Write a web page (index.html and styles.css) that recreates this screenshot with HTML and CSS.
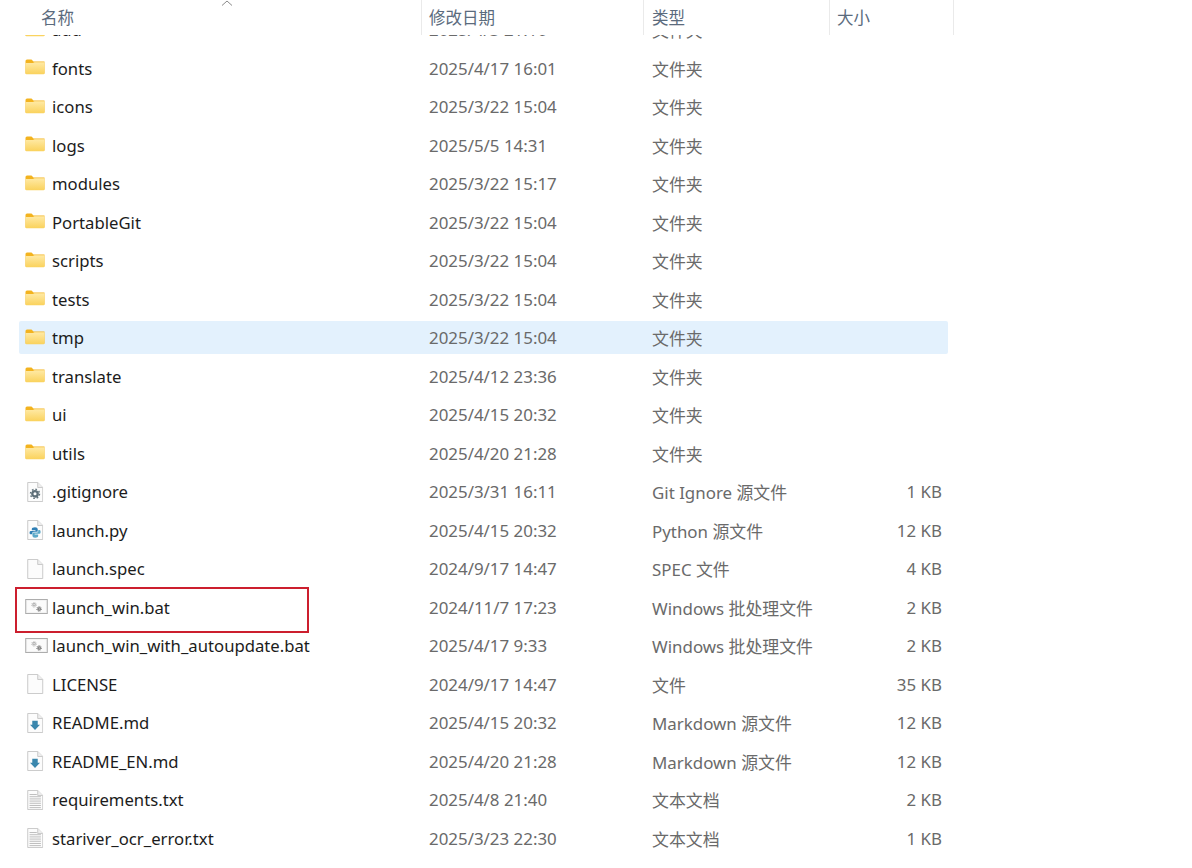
FILE: index.html
```html
<!DOCTYPE html>
<html lang="zh-CN">
<head>
    <meta charset="UTF-8">
    <title>launch</title>
    <link rel="stylesheet" href="styles.css">
</head>
<body>
    <svg class="defs" width="0" height="0">
        <defs>
            <linearGradient id="folderFill" x1="0" y1="0" x2="0" y2="1">
                <stop offset="0" stop-color="#ffeaa6"/>
                <stop offset="1" stop-color="#fad25c"/>
            </linearGradient>
            <symbol id="folder" viewBox="0 0 20 16">
                <path d="M0.5 2 Q0.5 0.5 2 0.5 H6.5 L8.5 2.5 H19.5 V14 Q19.5 15 18.5 15 H1.5 Q0.5 15 0.5 14 Z" fill="#f3b31f"/>
                <path d="M0.5 4 H8 L9.5 3.2 H19.5 V14.2 Q19.5 15.2 18.5 15.2 H1.5 Q0.5 15.2 0.5 14.2 Z" fill="url(#folderFill)"/>
            </symbol>
            <symbol id="page" viewBox="0 0 18 22">
                <path d="M1 0.5 H12 L17.5 6 V21.5 H1 Z" fill="#fcfcfc" stroke="#c4c4c4"/>
                <path d="M12 0.5 V6 H17.5" fill="#efefef" stroke="#c4c4c4"/>
            </symbol>
            <symbol id="gear-page" viewBox="0 0 18 22">
                <use href="#page"/>
                <circle cx="9" cy="13" r="3" fill="none" stroke="#5f7079" stroke-width="2.6"/>
                <circle cx="9" cy="13" r="5" fill="none" stroke="#5f7079" stroke-width="1.5" stroke-dasharray="1.8 2.1"/>
            </symbol>
            <symbol id="py-page" viewBox="0 0 18 22">
                <use href="#page"/>
                <path d="M9 8 Q5.5 8 5.5 9.8 V11.2 H9.5 V12 H4.2 Q3 12 3 14 Q3 15.8 4.2 15.8 H6 V14.5 Q6 13 8 13 H11 Q12 13 12 12 V9.8 Q12 8 9 8 Z" fill="#2f7fb5"/>
                <path d="M9 19.4 Q12.5 19.4 12.5 17.6 V16 H8.6 V15.2 H14 Q15.2 15.2 15.2 13.2 Q15.2 11 14 11 H12.6 V12.4 Q12.6 13.8 11 13.8 H7.5 Q6.2 13.8 6.2 15.2 V17.6 Q6.2 19.4 9 19.4 Z" fill="#5aa8c8"/>
            </symbol>
            <symbol id="md-page" viewBox="0 0 18 22">
                <use href="#page"/>
                <path d="M6 8.5 H12 V13 H14.5 L9 18.8 L3.5 13 H6 Z" fill="#3a87ad"/>
            </symbol>
            <symbol id="txt-page" viewBox="0 0 18 22">
                <use href="#page"/>
                <path d="M3 5 H11 M3 7.4 H15.5 M3 9.8 H15.5 M3 12.2 H15.5 M3 14.6 H15.5 M3 17 H15.5 M3 19.4 H15.5" stroke="#bdbdbd" stroke-width="1.1"/>
            </symbol>
            <symbol id="bat" viewBox="0 0 24 16">
                <rect x="0.5" y="0.5" width="23" height="15" fill="#f2f2f2" stroke="#a8a8a8"/>
                <rect x="2" y="2" width="20" height="12" fill="#fbfbfb"/>
                <circle cx="9.4" cy="6.2" r="1.3" fill="none" stroke="#a8a8a8" stroke-width="1.1"/>
                <circle cx="9.4" cy="6.2" r="2.5" fill="none" stroke="#a8a8a8" stroke-width="0.9" stroke-dasharray="1 1"/>
                <circle cx="14.8" cy="10.6" r="1.3" fill="none" stroke="#5a5a5a" stroke-width="1.1"/>
                <circle cx="14.8" cy="10.6" r="2.5" fill="none" stroke="#5a5a5a" stroke-width="0.9" stroke-dasharray="1 1"/>
            </symbol>
        </defs>
    </svg>

    <div class="col-header">
        <div class="col col-name"><span>名称</span><svg class="sort" width="12" height="6" viewBox="0 0 12 6"><path d="M1 5.5 L6 1 L11 5.5" fill="none" stroke="#8a8a8a"/></svg></div>
        <div class="col col-date">修改日期</div>
        <div class="col col-type">类型</div>
        <div class="col col-size">大小</div>
    </div>

    <div class="list" id="list"></div>

    <div class="callout"></div>

    <script src="list.js"></script>
</body>
</html>
```

FILE: list.js
```js
// name, date, type, size, icon
const files = [
    ['add', '2025/4/3 21:10', '文件夹', '', 'folder'],
    ['fonts', '2025/4/17 16:01', '文件夹', '', 'folder'],
    ['icons', '2025/3/22 15:04', '文件夹', '', 'folder'],
    ['logs', '2025/5/5 14:31', '文件夹', '', 'folder'],
    ['modules', '2025/3/22 15:17', '文件夹', '', 'folder'],
    ['PortableGit', '2025/3/22 15:04', '文件夹', '', 'folder'],
    ['scripts', '2025/3/22 15:04', '文件夹', '', 'folder'],
    ['tests', '2025/3/22 15:04', '文件夹', '', 'folder'],
    ['tmp', '2025/3/22 15:04', '文件夹', '', 'folder'],
    ['translate', '2025/4/12 23:36', '文件夹', '', 'folder'],
    ['ui', '2025/4/15 20:32', '文件夹', '', 'folder'],
    ['utils', '2025/4/20 21:28', '文件夹', '', 'folder'],
    ['.gitignore', '2025/3/31 16:11', 'Git Ignore 源文件', '1 KB', 'gear-page'],
    ['launch.py', '2025/4/15 20:32', 'Python 源文件', '12 KB', 'py-page'],
    ['launch.spec', '2024/9/17 14:47', 'SPEC 文件', '4 KB', 'page'],
    ['launch_win.bat', '2024/11/7 17:23', 'Windows 批处理文件', '2 KB', 'bat'],
    ['launch_win_with_autoupdate.bat', '2025/4/17 9:33', 'Windows 批处理文件', '2 KB', 'bat'],
    ['LICENSE', '2024/9/17 14:47', '文件', '35 KB', 'page'],
    ['README.md', '2025/4/15 20:32', 'Markdown 源文件', '12 KB', 'md-page'],
    ['README_EN.md', '2025/4/20 21:28', 'Markdown 源文件', '12 KB', 'md-page'],
    ['requirements.txt', '2025/4/8 21:40', '文本文档', '2 KB', 'txt-page'],
    ['stariver_ocr_error.txt', '2025/3/23 22:30', '文本文档', '1 KB', 'txt-page']
];

const list = document.getElementById('list');
files.forEach(function(f) {
    const row = document.createElement('div');
    row.className = f[0] === 'tmp' ? 'row selected' : 'row';
    row.innerHTML = `
        <div class="cell cell-name">
            <svg class="icon icon-${f[4]}"><use href="#${f[4]}"/></svg>
            <span>${f[0]}</span>
        </div>
        <div class="cell cell-date">${f[1]}</div>
        <div class="cell cell-type">${f[2]}</div>
        <div class="cell cell-size">${f[3]}</div>`;
    list.appendChild(row);
});
```

FILE: styles.css
```css
* {
    margin: 0;
    padding: 0;
    box-sizing: border-box;
}

html, body {
    height: 100%;
    overflow: hidden;
    background: #fff;
    font-family: 'Noto Sans', 'Noto Sans CJK SC', sans-serif;
}

.defs {
    position: absolute;
}

.col-header {
    display: flex;
    width: 954px;
    height: 35px;
    font-size: 16.5px;
    color: #5b6b7d;
}

.col {
    display: flex;
    align-items: center;
    height: 100%;
    padding: 0 0 2px 7px;
    border-right: 1px solid #eaeaea;
}

.col-name {
    position: relative;
    width: 422px;
    padding-left: 41px;
}
.col-date { width: 222px; }
.col-type { width: 186px; padding-left: 8px; }
.col-size { width: 124px; padding-left: 7px; }

.sort {
    position: absolute;
    top: 0;
    left: 221px;
}

/* list is scrolled a little, first row is cut by the header */
.list {
    height: 833px;
    padding-left: 19px;
    overflow: hidden;
}

.row {
    display: flex;
    align-items: center;
    width: 929px;
    height: 33px;
    margin-bottom: 5.5px;
    font-size: 16.9px;
    color: #6a6a6a;
}

.row:first-child {
    margin-top: -22px;
}

.row.selected {
    background: #e3f1fd;
    border-radius: 2px;
}

.cell-name {
    display: flex;
    align-items: center;
    width: 410px;
    font-size: 16.7px;
    color: #1c1c1c;
    white-space: nowrap;
}

.cell-name span {
    margin-left: 7px;
}

.icon {
    flex: none;
    width: 20px;
    height: 20px;
    margin-left: 6px;
}

.icon-bat {
    width: 23px;
    height: 15px;
    margin: -1px -3px 0 6px;
}

.icon-folder {
    height: 16px;
    margin-top: -2px;
}

.cell-date { width: 223px; }
.cell-type { width: 190px; }
.cell-size {
    flex: 1;
    padding-right: 6px;
    text-align: right;
}

.callout {
    position: absolute;
    top: 587px;
    left: 15px;
    width: 294px;
    height: 46px;
    border: 2px solid #cc1f2e;
}
```
